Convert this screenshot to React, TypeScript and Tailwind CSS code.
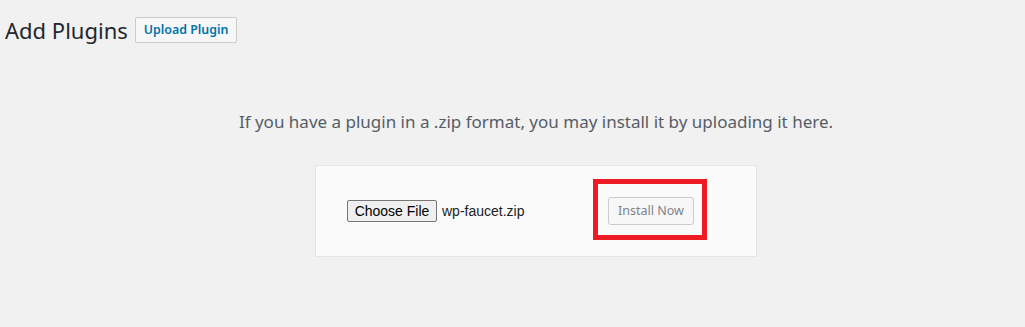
import React from "react";

export default function App() {
  const wp = { fontFamily: '"Noto Sans", "Open Sans", sans-serif' };
  const arial = { fontFamily: '"Liberation Sans", Arial, sans-serif' };
  return (
    <div className="w-[1025px] h-[327px] bg-[#f1f1f1] overflow-hidden" style={wp}>
      <div className="flex items-center pl-[5px] pt-[16px]">
        <h1 className="text-[22px] leading-[28px] text-[#23282d] font-normal">Add Plugins</h1>
        <button className="ml-[7px] h-[26px] px-[8px] border border-[#ccc] rounded-[2px] bg-[#f7f7f7] text-[12.4px] font-semibold text-[#0073aa] leading-[24px]">
          Upload Plugin
        </button>
      </div>
      <div className="pl-[47px] flex flex-col items-center">
        <p className="mt-[65px] text-[17px] leading-[26px] text-[#555d66]">
          If you have a plugin in a .zip format, you may install it by uploading it here.
        </p>
        <div className="mt-[30px] w-[442px] h-[92px] border border-[#e5e5e5] bg-[#fafafa] flex items-center pl-[31px]">
          <div className="flex items-center w-[261px]" style={arial}>
            <span className="h-[22px] w-[90px] flex items-center justify-center border border-[#767676] rounded-[2px] bg-[#efefef] text-[14px] text-black">
              Choose File
            </span>
            <span className="ml-[5px] text-[14px] text-[#222]">wp-faucet.zip</span>
          </div>
          <div className="relative">
            <button className="h-[28px] w-[86px] border border-[#ccc] rounded-[3px] bg-[#f7f7f7] text-[12.5px] text-[#7d8288]">
              Install Now
            </button>
            <div className="absolute left-[-15px] top-[-18px] w-[114px] h-[61px] border-[5px] border-[#ed1c24]" />
          </div>
        </div>
      </div>
    </div>
  );
}
